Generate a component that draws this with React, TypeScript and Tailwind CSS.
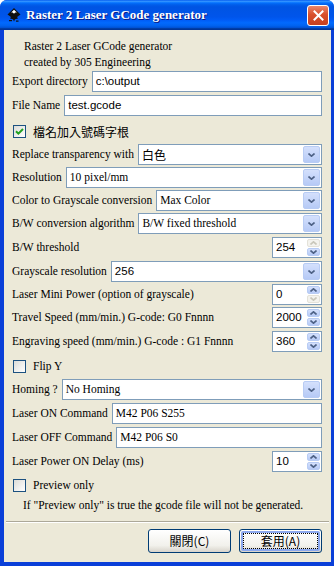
const serif = "font-['Liberation_Serif','Noto_Sans_CJK_TC',serif]"
const sans = "font-['Liberation_Sans','Noto_Sans_CJK_TC',sans-serif]"
const cjk = "font-['Noto_Sans_CJK_TC',sans-serif] text-[12px]"

function InkscapeIcon() {
  return (
    <svg width="16" height="16" viewBox="0 0 16 16">
      <path d="M8 1 L14.5 7.5 L11 10 L12 11.5 L9 12.3 L8 14.5 L7 12.3 L4 11.5 L5 10 L1.5 7.5 Z" fill="#111" />
      <path d="M8 2.8 L10.8 5.6 L9.2 5.6 L8 6.8 L6.8 5.6 L5.2 5.6 Z" fill="#fff" />
      <rect x="3" y="13" width="3" height="1.2" fill="#111" />
      <rect x="10" y="13.5" width="2.5" height="1.2" fill="#111" />
    </svg>
  )
}

function CloseButton() {
  return (
    <div className="w-[22px] h-[21px] rounded-[3px] border border-white bg-[linear-gradient(to_bottom,#E9866B,#D9502C_45%,#C7401F)] flex items-center justify-center">
      <svg width="11" height="11" viewBox="0 0 11 11">
        <path d="M1.5 1.5 L9.5 9.5 M9.5 1.5 L1.5 9.5" stroke="#fff" strokeWidth="2" strokeLinecap="square" />
      </svg>
    </div>
  )
}

function Chevron({ up = false, color = '#4D6185' }: { up?: boolean; color?: string }) {
  return (
    <svg width="7" height="4" viewBox="0 0 7 4">
      <path d={up ? 'M0.5 3.5 L3.5 0.8 L6.5 3.5' : 'M0.5 0.5 L3.5 3.2 L6.5 0.5'} stroke={color} strokeWidth="1.6" fill="none" />
    </svg>
  )
}

function TextRow({ label, value, font, mt }: { label: string; value: string; font: string; mt: string }) {
  return (
    <div className={`flex items-center h-[21px] gap-[4px] ${mt}`}>
      <span className="whitespace-nowrap">{label}</span>
      <div className={`flex-1 h-[21px] border border-[#7F9DB9] bg-white px-[3px] flex items-center ${font}`}>
        {value}
      </div>
    </div>
  )
}

function SelectRow({ label, value, font, mt }: { label: string; value: string; font: string; mt: string }) {
  return (
    <div className={`flex items-center h-[21px] gap-[4px] ${mt}`}>
      <span className="whitespace-nowrap">{label}</span>
      <div className="flex-1 h-[21px] border border-[#7F9DB9] bg-white flex items-center">
        <span className={`flex-1 px-[3px] ${font}`}>{value}</span>
        <div className="w-[17px] h-[17px] mr-[1px] rounded-[2px] border border-[#B8CCF4] bg-[linear-gradient(to_bottom,#D4E0FC,#B6CAF6)] flex items-center justify-center">
          <Chevron />
        </div>
      </div>
    </div>
  )
}

function SpinRow({ label, value, upOff = false, downOff = false, mt }: { label: string; value: string; upOff?: boolean; downOff?: boolean; mt: string }) {
  const on = 'bg-[linear-gradient(to_bottom,#D4E0FC,#B6CAF6)] border-[#B8CCF4]'
  const off = 'bg-[#F4F3EE] border-[#E4E2D9]'
  return (
    <div className={`flex items-center h-[21px] ${mt}`}>
      <span className="whitespace-nowrap">{label}</span>
      <div className="ml-auto w-[50px] h-[21px] border border-[#7F9DB9] bg-white flex">
        <span className={`flex-1 px-[3px] flex items-center text-[11.5px] ${sans}`}>{value}</span>
        <div className="w-[13px] flex flex-col gap-[1px] py-[1px] mr-[1px]">
          <div className={`flex-1 rounded-[2px] border flex items-center justify-center ${upOff ? off : on}`}>
            <Chevron up color={upOff ? '#C9C7BA' : '#4D6185'} />
          </div>
          <div className={`flex-1 rounded-[2px] border flex items-center justify-center ${downOff ? off : on}`}>
            <Chevron color={downOff ? '#C9C7BA' : '#4D6185'} />
          </div>
        </div>
      </div>
    </div>
  )
}

function CheckRow({ label, checked = false, font, mt }: { label: string; checked?: boolean; font: string; mt: string }) {
  return (
    <div className={`flex items-center h-[21px] pl-[9px] gap-[7px] ${mt}`}>
      <div className="w-[13px] h-[13px] border border-[#1C5180] bg-[linear-gradient(135deg,#DCDCD7,#FFFFFF)] flex items-center justify-center">
        {checked && (
          <svg width="9" height="9" viewBox="0 0 9 9">
            <path d="M1 4.2 L3.4 6.6 L8 2" stroke="#21A121" strokeWidth="2" fill="none" />
          </svg>
        )}
      </div>
      <span className={font}>{label}</span>
    </div>
  )
}

function XPButton({ label, isDefault = false }: { label: string; isDefault?: boolean }) {
  return (
    <div className="w-[83px] h-[24px] rounded-[3px] border border-[#003C74] bg-[linear-gradient(to_bottom,#FFFFFF,#F2F1EC_70%,#D8D4CB)] p-[1px]">
      <div className={`w-full h-full rounded-[2px] flex items-center justify-center ${isDefault ? 'border-2 border-[#8CA8EE]' : ''}`}>
        <div className={`px-[10px] h-full w-full flex items-center justify-center ${cjk} ${isDefault ? 'border border-dotted border-black' : ''}`}>
          {label}
        </div>
      </div>
    </div>
  )
}

export default function App() {
  return (
    <div className={`w-[334px] h-[566px] flex flex-col bg-[#0A3FD8] rounded-t-[7px] overflow-hidden text-[11.5px] text-black ${serif}`}>
      <div className="h-[30px] shrink-0 flex items-center pl-[6px] pr-[5px] bg-[linear-gradient(to_bottom,#0058EE,#3593FF_4%,#288EFF_6%,#127DFF_8%,#036FFC_10%,#0262EE_14%,#0057E5_20%,#0054E3_24%,#0055EB_56%,#005BF5_66%,#026AFE_76%,#0062EF_86%,#0052D6_92%,#0040AB_94%,#003092)]">
        <InkscapeIcon />
        <span className="ml-[4px] text-white font-bold text-[13px] [text-shadow:1px_1px_0_#0A1883]">
          Raster 2 Laser GCode generator
        </span>
        <div className="ml-auto">
          <CloseButton />
        </div>
      </div>

      <div className="flex-1 ml-[4px] mr-[3px] mb-[4px] bg-[#ECE9D8] flex flex-col">
        <div className="pt-[8px] pl-[20px] leading-[16px]">
          <div>Raster 2 Laser GCode generator</div>
          <div>created by 305 Engineering</div>
        </div>

        <div className="pl-[8px] pr-[9px] flex flex-col">
          <TextRow label="Export directory" value="c:\output" font={`${sans} text-[11.5px]`} mt="mt-[1px]" />
          <TextRow label="File Name" value="test.gcode" font={`${sans} text-[11.5px]`} mt="mt-[3px]" />
        </div>
        <CheckRow label="檔名加入號碼字根" checked font={cjk} mt="mt-[5px]" />
        <div className="pl-[8px] pr-[9px] flex flex-col">
          <SelectRow label="Replace transparency with" value="白色" font={cjk} mt="mt-[2px]" />
          <SelectRow label="Resolution" value="10 pixel/mm" font={serif} mt="mt-[2px]" />
          <SelectRow label="Color to Grayscale conversion" value="Max Color" font={serif} mt="mt-[2px]" />
          <SelectRow label="B/W conversion algorithm" value="B/W fixed threshold" font={serif} mt="mt-[2px]" />
          <SpinRow label="B/W threshold" value="254" upOff mt="mt-[3px]" />
          <SelectRow label="Grayscale resolution" value="256" font={`${sans} text-[11.5px]`} mt="mt-[3px]" />
          <SpinRow label="Laser Mini Power (option of grayscale)" value="0" downOff mt="mt-[2px]" />
          <SpinRow label="Travel Speed (mm/min.) G-code: G0 Fnnnn" value="2000" mt="mt-[2px]" />
          <SpinRow label="Engraving speed (mm/min.) G-code : G1 Fnnnn" value="360" mt="mt-[3px]" />
        </div>
        <CheckRow label="Flip Y" font={serif} mt="mt-[4px]" />
        <div className="pl-[8px] pr-[9px] flex flex-col">
          <SelectRow label="Homing ?" value="No Homing" font={serif} mt="mt-[2px]" />
          <TextRow label="Laser ON Command" value="M42 P06 S255" font={serif} mt="mt-[3px]" />
          <TextRow label="Laser OFF Command" value="M42 P06 S0" font={serif} mt="mt-[3px]" />
          <SpinRow label="Laser Power ON Delay (ms)" value="10" mt="mt-[3px]" />
        </div>
        <CheckRow label="Preview only" font={serif} mt="mt-[3px]" />
        <div className="mt-[1px] pl-[19px] leading-[16px]">
          If "Preview only" is true the gcode file will not be generated.
        </div>

        <div className="mt-[8px] mx-[2px] border-t border-[#ACA899] border-b border-b-white" />

        <div className="mt-[6px] pr-[9px] flex justify-end gap-[8px]">
          <XPButton label="關閉(C)" />
          <XPButton label="套用(A)" isDefault />
        </div>
      </div>
    </div>
  )
}
